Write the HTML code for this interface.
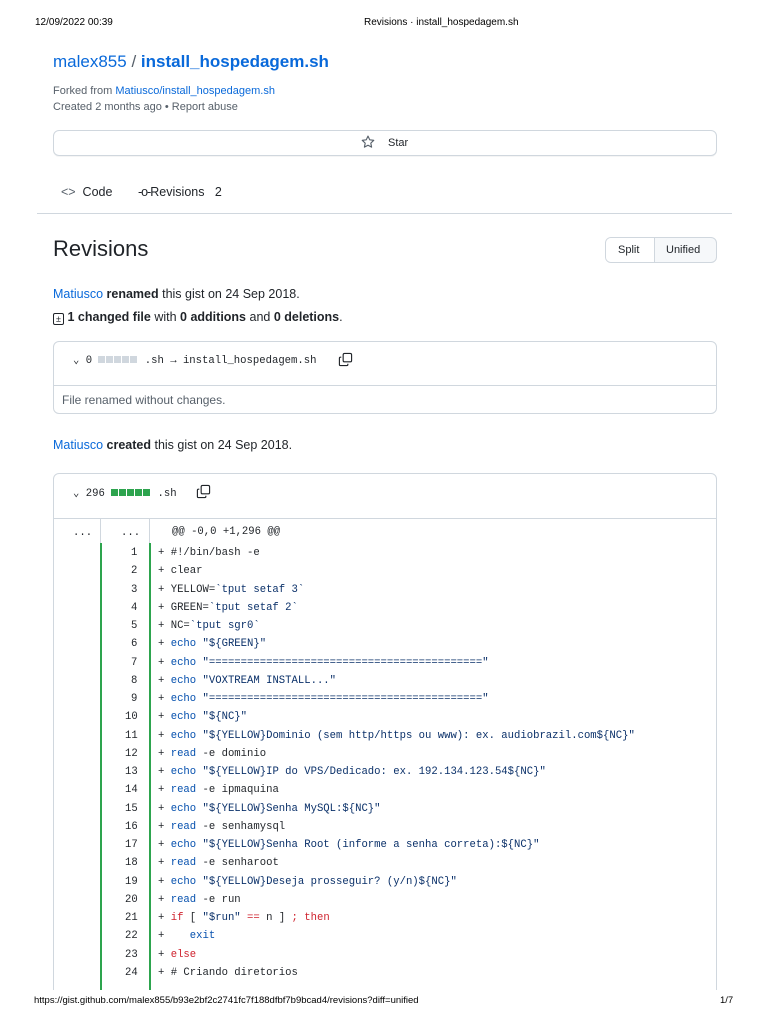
<!DOCTYPE html>
<html style="overflow:hidden;height:1024px"><head><meta charset="utf-8"><style>
*{box-sizing:border-box;margin:0;padding:0}
body{width:768px;height:1024px;overflow:hidden;background:#fff;font-family:"Liberation Sans",sans-serif;color:#1f2328;position:relative}
.abs{position:absolute;white-space:nowrap}
a{color:#0969da;text-decoration:none}
.mono{font-family:"Liberation Mono",monospace}
.gray{color:#57606a}
.b{font-weight:bold}
.box{position:absolute;border:1px solid #d0d7de;border-radius:6px}
.sq{display:inline-block;width:7px;height:7px;margin-right:1px;vertical-align:0px}
.ln{position:absolute;font-family:"Liberation Mono",monospace;font-size:10.6px;white-space:pre;color:#1f2328}
.k{color:#0550ae}.s{color:#0a3069}.r{color:#cf222e}
</style></head><body>
<div class="abs" style="left:35px;top:17px;font-size:10px;color:#000">12/09/2022 00:39</div>
<div class="abs" style="left:364px;top:17px;font-size:10px;color:#000">Revisions · install_hospedagem.sh</div>

<div class="abs" style="left:53px;top:52px;font-size:17px"><a>malex855</a> <span class="gray">/</span> <a class="b">install_hospedagem.sh</a></div>
<div class="abs gray" style="left:53px;top:85px;font-size:11px">Forked from <a>Matiusco/install_hospedagem.sh</a></div>
<div class="abs gray" style="left:53px;top:101px;font-size:11px">Created 2 months ago • Report abuse</div>

<div class="box" style="left:53px;top:130px;width:664px;height:26px;box-shadow:0 1px 0 rgba(0,0,0,.04)"></div>
<svg class="abs" style="left:361px;top:135px" width="14" height="14" viewBox="0 0 16 16"><path d="M8 1.3l2 4.2 4.6.6-3.4 3.2.9 4.6L8 11.7l-4.1 2.2.9-4.6L1.4 6.1l4.6-.6z" fill="none" stroke="#57606a" stroke-width="1.3" stroke-linejoin="round"/></svg>
<div class="abs" style="left:388px;top:137px;font-size:11px">Star</div>

<div class="abs" style="left:61px;top:185px;font-size:12.5px"><span style="color:#57606a">&lt;&gt;</span>&nbsp; Code</div>
<div class="abs" style="left:138px;top:185px;font-size:12.5px"><span style="letter-spacing:-1px">-o-</span>Revisions &nbsp;&nbsp;2</div>
<div class="abs" style="left:37px;top:213px;width:695px;height:1px;background:#d0d7de"></div>

<div class="abs" style="left:53px;top:236px;font-size:22px">Revisions</div>
<div class="box" style="left:605px;top:237px;width:112px;height:26px;background:#f6f8fa"></div>
<div class="abs" style="left:654px;top:238px;width:1px;height:24px;background:#d0d7de"></div>
<div class="abs" style="left:606px;top:238px;width:48px;height:24px;background:#fff;border-radius:5px 0 0 5px"></div>
<div class="abs" style="left:618px;top:244px;font-size:11px">Split</div>
<div class="abs" style="left:666px;top:244px;font-size:11px">Unified</div>

<div class="abs" style="left:53px;top:287px;font-size:12.5px"><a>Matiusco</a> <span class="b">renamed</span> this gist on 24 Sep 2018.</div>
<div class="abs" style="left:53px;top:310px;font-size:12.5px"><span style="display:inline-block;width:11px;height:12px;border:1px solid #1f2328;border-radius:2px;font-size:9px;line-height:10px;text-align:center;vertical-align:-1px">±</span> <span class="b">1 changed file</span> with <span class="b">0 additions</span> and <span class="b">0 deletions</span>.</div>

<div class="box" style="left:53px;top:341px;width:664px;height:73px"></div>
<div class="abs" style="left:54px;top:385px;width:662px;height:1px;background:#d0d7de"></div>
<div class="abs mono" style="left:73px;top:354px;font-size:10.6px">⌄ 0 <span class="sq" style="background:#d0d7de"></span><span class="sq" style="background:#d0d7de"></span><span class="sq" style="background:#d0d7de"></span><span class="sq" style="background:#d0d7de"></span><span class="sq" style="background:#d0d7de"></span> .sh → install_hospedagem.sh</div>
<svg class="abs" style="left:338px;top:352px" width="15" height="15" viewBox="0 0 16 16" fill="none" stroke="#1f2328" stroke-width="1.2"><rect x="5.5" y="1.5" width="9" height="9" rx="1.5"/><path d="M3.5 5.5h-1a1 1 0 0 0-1 1v7a1 1 0 0 0 1 1h7a1 1 0 0 0 1-1v-1"/></svg>
<div class="abs gray" style="left:62px;top:393px;font-size:12px">File renamed without changes.</div>

<div class="abs" style="left:53px;top:438px;font-size:12.5px"><a>Matiusco</a> <span class="b">created</span> this gist on 24 Sep 2018.</div>

<div class="box" style="left:53px;top:473px;width:664px;height:540px"></div>
<div class="abs" style="left:54px;top:518px;width:662px;height:1px;background:#d0d7de"></div>
<div class="abs mono" style="left:73px;top:487px;font-size:10.6px">⌄ 296 <span class="sq" style="background:#2da44e"></span><span class="sq" style="background:#2da44e"></span><span class="sq" style="background:#2da44e"></span><span class="sq" style="background:#2da44e"></span><span class="sq" style="background:#2da44e"></span> .sh</div>
<svg class="abs" style="left:196px;top:484px" width="15" height="15" viewBox="0 0 16 16" fill="none" stroke="#1f2328" stroke-width="1.2"><rect x="5.5" y="1.5" width="9" height="9" rx="1.5"/><path d="M3.5 5.5h-1a1 1 0 0 0-1 1v7a1 1 0 0 0 1 1h7a1 1 0 0 0 1-1v-1"/></svg>
<div class="abs" style="left:100px;top:519px;width:1px;height:24px;background:#d0d7de"></div>
<div class="abs" style="left:149px;top:519px;width:1px;height:24px;background:#d0d7de"></div>
<div class="ln gray" style="left:73px;top:527px">...</div>
<div class="ln gray" style="left:121px;top:527px">...</div>
<div class="ln gray" style="left:172px;top:526px">@@ -0,0 +1,296 @@</div>
<div class="abs" style="left:100px;top:543px;width:2px;height:447px;background:#2da44e"></div>
<div class="abs" style="left:149px;top:543px;width:2px;height:447px;background:#2da44e"></div>

<div id="code"></div>
<script>
var L=['#!/bin/bash -e','clear','YELLOW=<span class="s">`tput setaf 3`</span>','GREEN=<span class="s">`tput setaf 2`</span>','NC=<span class="s">`tput sgr0`</span>',
'<span class="k">echo</span> <span class="s">"${GREEN}"</span>','<span class="k">echo</span> <span class="s">"==========================================="</span>','<span class="k">echo</span> <span class="s">"VOXTREAM INSTALL..."</span>','<span class="k">echo</span> <span class="s">"==========================================="</span>','<span class="k">echo</span> <span class="s">"${NC}"</span>',
'<span class="k">echo</span> <span class="s">"${YELLOW}Dominio (sem http/https ou www): ex. audiobrazil.com${NC}"</span>','<span class="k">read</span> -e dominio','<span class="k">echo</span> <span class="s">"${YELLOW}IP do VPS/Dedicado: ex. 192.134.123.54${NC}"</span>','<span class="k">read</span> -e ipmaquina','<span class="k">echo</span> <span class="s">"${YELLOW}Senha MySQL:${NC}"</span>','<span class="k">read</span> -e senhamysql','<span class="k">echo</span> <span class="s">"${YELLOW}Senha Root (informe a senha correta):${NC}"</span>','<span class="k">read</span> -e senharoot','<span class="k">echo</span> <span class="s">"${YELLOW}Deseja prosseguir? (y/n)${NC}"</span>','<span class="k">read</span> -e run',
'<span class="r">if</span> [ <span class="s">"$run"</span> <span class="r">==</span> n ] <span class="r">;</span> <span class="r">then</span>','   <span class="k">exit</span>','<span class="r">else</span>','# Criando diretorios'];
var h='';for(var i=0;i<L.length;i++){var y=547+i*18.26;
h+='<div class="ln" style="left:'+(i<9?131:125)+'px;top:'+y+'px">'+(i+1)+'</div><div class="ln" style="left:158px;top:'+y+'px">+ '+L[i]+'</div>';}
document.getElementById('code').innerHTML=h;
</script>

<div class="abs" style="left:0;top:990px;width:768px;height:34px;background:#fff"></div>
<div class="abs" style="left:34px;top:995px;font-size:9.5px;color:#000">https://gist.github.com/malex855/b93e2bf2c2741fc7f188dfbf7b9bcad4/revisions?diff=unified</div>
<div class="abs" style="left:720px;top:995px;font-size:9.5px;color:#000">1/7</div>
</body></html>
